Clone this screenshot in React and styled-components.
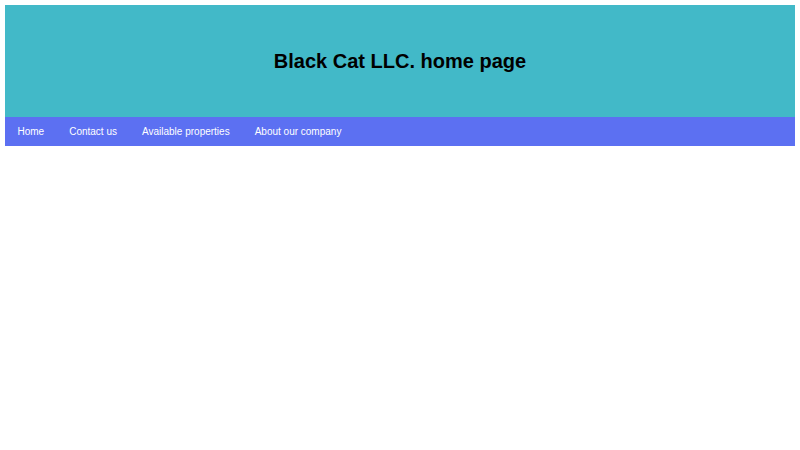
import React from "react";
import styled, { createGlobalStyle } from "styled-components";

const Global = createGlobalStyle`
  body {
    margin: 5px;
    background: #ffffff;
    font-family: "Liberation Sans", Arial, sans-serif;
  }
`;

const Header = styled.header`
  height: 112px;
  background: #42b9c8;
  display: flex;
  align-items: center;
  justify-content: center;
`;

const Title = styled.h1`
  margin: 0;
  font-size: 20px;
  font-weight: bold;
  color: #000;
`;

const Nav = styled.nav`
  height: 29px;
  background: #5c70f2;
  display: flex;
  align-items: center;
`;

const NavLink = styled.a`
  padding: 0 12.5px 1px;
  font-size: 10px;
  color: #ffffff;
  text-decoration: none;
  cursor: pointer;
`;

const links = ["Home", "Contact us", "Available properties", "About our company"];

export default function App() {
  return (
    <>
      <Global />
      <Header>
        <Title>Black Cat LLC. home page</Title>
      </Header>
      <Nav>
        {links.map((l) => (
          <NavLink key={l}>{l}</NavLink>
        ))}
      </Nav>
    </>
  );
}
